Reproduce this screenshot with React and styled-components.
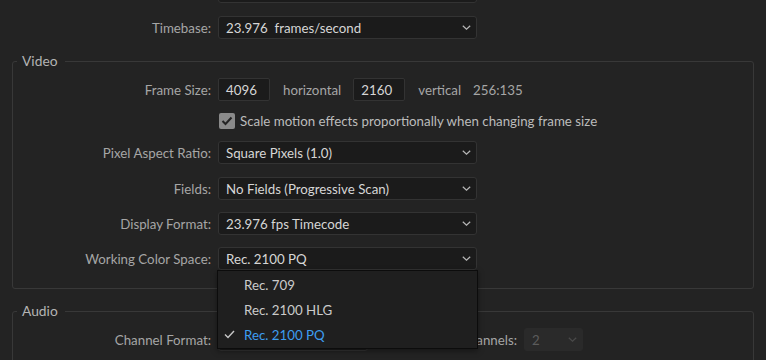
import React from "react";
import styled, { createGlobalStyle } from "styled-components";

const GlobalStyle = createGlobalStyle`
  html, body {
    margin: 0;
    padding: 0;
    background: #232323;
  }
  * {
    box-sizing: border-box;
  }
`;

const Page = styled.div`
  width: 766px;
  height: 360px;
  overflow: hidden;
  background: #232323;
  font-family: Lato, "Noto Sans", sans-serif;
  font-size: 13.3px;
  color: #a9a9a9;
`;

const Scroller = styled.div`
  margin-top: -20px;
`;

const TopSection = styled.div`
  padding-left: 13px;
  display: flex;
  flex-direction: column;
  gap: 13px;
`;

const Group = styled.fieldset`
  margin: 14px 12px 0;
  padding: 9px 0 18px;
  border: 1px solid #383838;
  border-radius: 3px;
  min-width: 0;
`;

const Legend = styled.legend`
  margin-left: 4px;
  padding: 0 7px 0 5px;
  line-height: 16px;
  font-size: 13.8px;
  color: #b4b4b4;
`;

const Rows = styled.div`
  display: flex;
  flex-direction: column;
  gap: 12px;
`;

const Row = styled.div`
  display: flex;
  align-items: center;
  height: 23px;
  margin-top: ${(p) => p.$mt || 0}px;
`;

const Label = styled.div`
  width: ${(p) => p.$w || 205}px;
  flex: none;
  text-align: right;
  padding-right: 7px;
  white-space: nowrap;
  color: #a6a6a6;
`;

const SelectBox = styled.div`
  width: ${(p) => p.$w || 259}px;
  height: 23px;
  flex: none;
  display: flex;
  align-items: center;
  justify-content: space-between;
  padding: 0 5px 0 7px;
  border-radius: 3px;
  background: ${(p) => (p.$disabled ? "#2a2a2a" : "#1b1b1b")};
  border: 1px solid ${(p) => (p.$disabled ? "#2a2a2a" : "#333")};
  color: ${(p) => (p.$disabled ? "#5c5c5c" : "#d6d6d6")};
  white-space: pre;
`;

const Chevron = styled.svg`
  width: 9px;
  height: 5px;
  flex: none;
`;

const NumberInput = styled.div`
  width: 52px;
  height: 23px;
  flex: none;
  display: flex;
  align-items: center;
  padding-left: 7px;
  border-radius: 2px;
  background: #1b1b1b;
  border: 1px solid #333;
  color: #d6d6d6;
`;

const Unit = styled.span`
  margin: 0 12px 0 13px;
  color: #a6a6a6;
  white-space: nowrap;
`;

const Ratio = styled.span`
  color: #a6a6a6;
`;

const CheckRow = styled.label`
  display: flex;
  align-items: center;
  gap: 5px;
  padding-left: 206px;
  height: 16px;
  color: #bcbcbc;
`;

const CheckBox = styled.span`
  width: 16px;
  height: 16px;
  flex: none;
  border-radius: 2px;
  background: #8a8a8a;
  display: flex;
  align-items: center;
  justify-content: center;
`;

const Anchor = styled.div`
  position: relative;
  flex: none;
`;

const Menu = styled.ul`
  position: absolute;
  top: 100%;
  left: -1px;
  width: 261px;
  margin: 0;
  padding: 1px 0;
  list-style: none;
  background: #1f1f1f;
  border: 1px solid #0c0c0c;
  box-shadow: 0 2px 6px rgba(0, 0, 0, 0.4);
  z-index: 5;
`;

const MenuItem = styled.li`
  position: relative;
  height: 25px;
  display: flex;
  align-items: center;
  padding-left: 26px;
  color: ${(p) => (p.$selected ? "#3d9df0" : "#cbcbcb")};
`;

const Tick = styled.svg`
  position: absolute;
  left: 6px;
  top: 8px;
  width: 11px;
  height: 9px;
`;

const Arrow = ({ color = "#b8b8b8" }) => (
  <Chevron viewBox="0 0 9 5">
    <polyline points="0.8,0.8 4.5,4.2 8.2,0.8" fill="none" stroke={color} strokeWidth="1.2" />
  </Chevron>
);

const Select = ({ value, w, disabled }) => (
  <SelectBox $w={w} $disabled={disabled}>
    <span>{value}</span>
    <Arrow color={disabled ? "#4a4a4a" : "#b8b8b8"} />
  </SelectBox>
);

const colorSpaces = ["Rec. 709", "Rec. 2100 HLG", "Rec. 2100 PQ"];

export default function App() {
  const current = "Rec. 2100 PQ";

  return (
    <Page>
      <GlobalStyle />
      <Scroller>
        <TopSection>
          <Row>
            <Label>Editing Mode:</Label>
            <Select value="Custom" />
          </Row>
          <Row>
            <Label>Timebase:</Label>
            <Select value="23.976  frames/second" />
          </Row>
        </TopSection>

        <Group>
          <Legend>Video</Legend>
          <Rows>
            <Row>
              <Label>Frame Size:</Label>
              <NumberInput>4096</NumberInput>
              <Unit>horizontal</Unit>
              <NumberInput>2160</NumberInput>
              <Unit>vertical</Unit>
              <Ratio>256:135</Ratio>
            </Row>
            <CheckRow>
              <CheckBox>
                <svg width="12" height="10" viewBox="0 0 12 10">
                  <polyline points="1.5,5 4.5,8 10.5,1.5" fill="none" stroke="#232323" strokeWidth="2" />
                </svg>
              </CheckBox>
              Scale motion effects proportionally when changing frame size
            </CheckRow>
            <Row>
              <Label>Pixel Aspect Ratio:</Label>
              <Select value="Square Pixels (1.0)" />
            </Row>
            <Row $mt={1}>
              <Label>Fields:</Label>
              <Select value="No Fields (Progressive Scan)" />
            </Row>
            <Row>
              <Label>Display Format:</Label>
              <Select value="23.976 fps Timecode" />
            </Row>
            <Row>
              <Label>Working Color Space:</Label>
              <Anchor>
                <Select value={current} />
                <Menu>
                  {colorSpaces.map((c) => (
                    <MenuItem key={c} $selected={c === current}>
                      {c === current && (
                        <Tick viewBox="0 0 11 9">
                          <polyline points="1,4.5 4,7.5 10,1" fill="none" stroke="#c8c8c8" strokeWidth="1.4" />
                        </Tick>
                      )}
                      {c}
                    </MenuItem>
                  ))}
                </Menu>
              </Anchor>
            </Row>
          </Rows>
        </Group>

        <Group>
          <Legend>Audio</Legend>
          <Rows>
            <Row>
              <Label>Channel Format:</Label>
              <Select value="Stereo" w={150} />
              <Label $w={156}>Number of Channels:</Label>
              <Select value="2" w={59} disabled />
            </Row>
          </Rows>
        </Group>
      </Scroller>
    </Page>
  );
}
